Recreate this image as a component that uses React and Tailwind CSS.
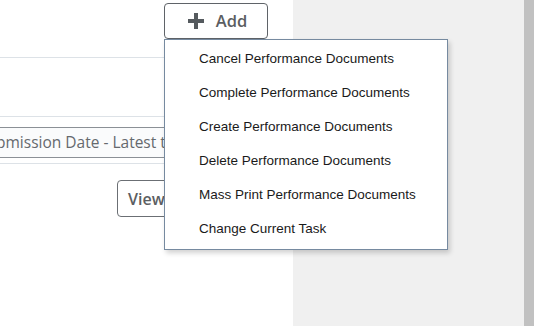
import React from "react";

const menuItems = [
  "Cancel Performance Documents",
  "Complete Performance Documents",
  "Create Performance Documents",
  "Delete Performance Documents",
  "Mass Print Performance Documents",
  "Change Current Task",
];

function PlusIcon() {
  return (
    <svg width="16" height="16" viewBox="0 0 16 16" className="shrink-0">
      <rect x="6" y="0" width="4" height="16" fill="#555a5e" />
      <rect x="0" y="6" width="16" height="4" fill="#555a5e" />
    </svg>
  );
}

export default function App() {
  return (
    <div className="flex h-[326px] w-full overflow-hidden bg-white font-['Open_Sans',sans-serif]">
      {/* main panel */}
      <div className="w-[293px] shrink-0 bg-white relative">
        {/* toolbar */}
        <div className="h-[58px] border-b border-[#dde2e7] flex justify-end items-start pt-[3px] pr-[25px]">
          <div className="relative z-10">
            <button className="h-[36px] w-[104px] flex items-center justify-center gap-[12px] pl-[3px] rounded-[4px] border border-[#5f6368] bg-white text-[16.5px] font-semibold text-[#5b5e62]">
              <PlusIcon />
              <span>Add</span>
            </button>

            {/* dropdown */}
            <div className="absolute left-0 top-full w-[284px] border border-[#768aa0] bg-white pt-[2px] pb-[3px] shadow-[2px_3px_5px_rgba(0,0,0,0.18)] font-['Liberation_Sans',Arial,sans-serif]">
              {menuItems.map((item) => (
                <div key={item} className="h-[34px] flex items-center pl-[34px] text-[13.5px] text-[#1a1a1a] whitespace-nowrap">
                  {item}
                </div>
              ))}
            </div>
          </div>
        </div>

        <div className="h-[59px] border-b border-[#dde2e7]" />

        {/* sort field */}
        <div className="mt-[10px] overflow-hidden">
          <div className="ml-[-30px] h-[31px] border-y border-[#8b9096] bg-[#fafbfc] flex items-center pl-[8px] text-[15.5px] font-medium text-[#65696e] whitespace-nowrap">
            Submission Date - Latest to Earliest
          </div>
        </div>
        <div className="mt-[5px] h-px bg-[#dde2e7]" />

        <div className="mt-[16px] ml-[117px]">
          <button className="h-[37px] w-[90px] rounded-[4px] border border-[#6b6f74] bg-white pl-[10px] text-left text-[16px] font-semibold text-[#5b5e62]">
            View
          </button>
        </div>
      </div>

      {/* side area */}
      <div className="flex-1 bg-[#f0f0f0]" />
      <div className="w-[10px] shrink-0 bg-[#c1c1c1]" />
    </div>
  );
}
